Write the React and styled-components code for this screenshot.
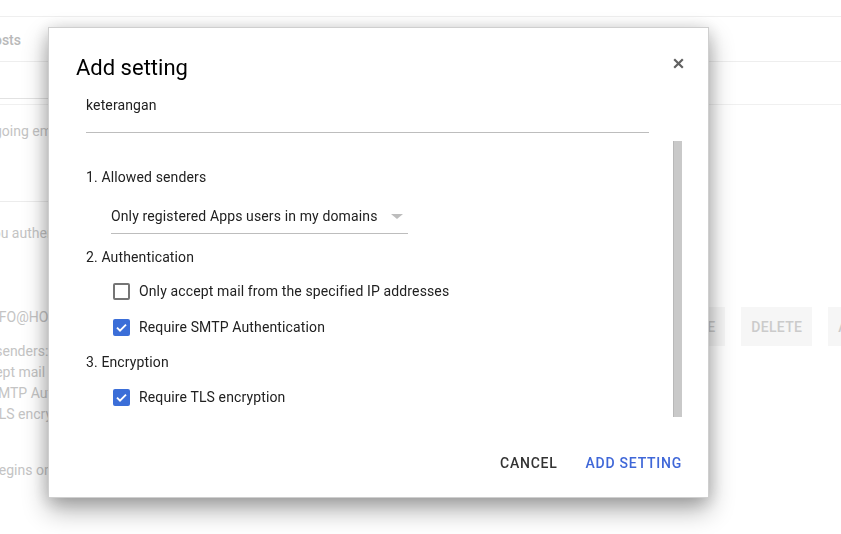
import React, { useLayoutEffect, useRef, useState } from "react";
import styled, { createGlobalStyle } from "styled-components";

const GlobalStyle = createGlobalStyle`
  html, body {
    margin: 0;
    padding: 0;
    background: #ffffff;
    overflow: hidden;
  }
  body {
    font-family: Roboto, "Liberation Sans", Arial, sans-serif;
    -webkit-font-smoothing: antialiased;
  }
`;

/* ---------- page behind the dialog ---------- */

const Page = styled.div`
  width: 960px;
  height: 534px;
  overflow: hidden;
  color: #c4c4c4;
  font-size: 14px;
`;

const TopBar = styled.div`
  height: 16px;
  border-bottom: 1px solid #efefef;
`;

const Tabs = styled.div`
  height: 45px;
  display: flex;
  align-items: center;
  padding-top: 2px;
  box-sizing: border-box;
  border-bottom: 1px solid #eeeeee;
`;

const Tab = styled.div`
  margin-left: ${(p) => -p.offset}px;
  font-size: 14px;
  font-weight: 500;
  color: #b9b9b9;
`;

const SubBar = styled.div`
  width: 640px;
  height: 36px;
  border-bottom: 1px solid #e2e2e2;
`;

const Section = styled.div`
  margin-top: 5px;
  border-top: 1px solid #f0f0f0;
  padding-top: 16px;
`;

const Block = styled.div`
  width: 640px;
  padding-bottom: 60px;
  border-bottom: 1px solid #ececec;
`;

const Line = styled.div`
  margin-left: ${(p) => -p.offset}px;
  line-height: ${(p) => p.lh || 20}px;
  white-space: nowrap;
`;

const AuthLine = styled(Line)`
  margin-top: 21px;
`;

const HostRow = styled.div`
  margin-top: 64px;
  display: grid;
  grid-template-columns: 652px auto;
  align-items: start;
`;

const Summary = styled.div`
  margin-top: 14px;
`;

const Footnote = styled(Line)`
  margin-top: 35px;
`;

const RowButtons = styled.div`
  display: flex;
  gap: 16px;
`;

const FlatButton = styled.div`
  height: 39px;
  padding: 0 10px;
  display: flex;
  align-items: center;
  background: #f6f6f6;
  color: #cbcbcb;
  font-weight: 500;
  letter-spacing: 0.3px;
  white-space: nowrap;
`;

/* ---------- dialog ---------- */

const Dialog = styled.div`
  position: fixed;
  left: 48px;
  top: 27px;
  width: 661px;
  height: 471px;
  box-sizing: border-box;
  background: #ffffff;
  border: 1px solid #cfcfcf;
  box-shadow: 0 12px 24px rgba(0, 0, 0, 0.32), 0 3px 16px rgba(0, 0, 0, 0.18);
  display: flex;
  flex-direction: column;
  color: #212121;
  letter-spacing: 0.13px;
`;

const Header = styled.div`
  display: flex;
  align-items: flex-start;
  justify-content: space-between;
  padding: 26px 18px 10px 27px;
`;

const Title = styled.h2`
  margin: 0;
  font-size: 22px;
  line-height: 28px;
  font-weight: 400;
  letter-spacing: 0;
  color: #000000;
`;

const CloseButton = styled.button`
  margin-top: -3px;
  width: 24px;
  height: 24px;
  padding: 0;
  border: none;
  background: none;
  display: flex;
  align-items: center;
  justify-content: center;
  color: #616161;
`;

const ScrollWrap = styled.div`
  position: relative;
  height: 328px;
  margin: 0 26px 0 26px;
`;

const ScrollBody = styled.div`
  height: 100%;
  padding: 0 33px 17px 11px;
  box-sizing: border-box;
  overflow-y: scroll;
  scrollbar-width: none;

  &::-webkit-scrollbar {
    display: none;
  }
`;

const Thumb = styled.div`
  position: absolute;
  right: 0;
  width: 9px;
  box-sizing: border-box;
  background: #c9c9c9;
  border-left: 1px solid #b8b8b8;
`;

const Field = styled.div`
  margin-top: 40px;
`;

const FieldLabel = styled.div`
  font-size: 12px;
  line-height: 16px;
  color: #757575;
`;

const TextInput = styled.div`
  margin-top: 5px;
  line-height: 20px;
  font-size: 14px;
  padding-bottom: 17px;
  border-bottom: 1px solid #bdbdbd;
`;

const Heading = styled.div`
  margin-top: ${(p) => p.gap}px;
  font-size: 14px;
  line-height: 20px;
  color: #212121;
`;

const Select = styled.div`
  margin: 19px 0 0 25px;
  width: 297px;
  display: flex;
  align-items: center;
  justify-content: space-between;
  font-size: 14px;
  line-height: 20px;
  padding-bottom: 7px;
  border-bottom: 1px solid #bdbdbd;
`;

const Caret = styled.span`
  margin-right: 5px;
  width: 0;
  height: 0;
  border-left: 6px solid transparent;
  border-right: 6px solid transparent;
  border-top: 5px solid #bdbdbd;
`;

const CheckRow = styled.label`
  margin: ${(p) => p.gap}px 0 0 27px;
  display: flex;
  align-items: center;
  gap: 9px;
  font-size: 14px;
  line-height: 20px;
`;

const Box = styled.span`
  width: 17px;
  height: 17px;
  box-sizing: border-box;
  border-radius: 2px;
  display: flex;
  align-items: center;
  justify-content: center;
  border: 2px solid ${(p) => (p.checked ? "#3b6ed8" : "#757575")};
  background: ${(p) => (p.checked ? "#3b6ed8" : "#ffffff")};
`;

const Footer = styled.div`
  flex: 1;
  display: flex;
  justify-content: flex-end;
  align-items: flex-start;
  gap: 12px;
  padding: 25px 18px 0 0;
`;

const TextButton = styled.button`
  height: 36px;
  padding: 0 8px;
  border: none;
  background: none;
  font-family: inherit;
  font-size: 14px;
  font-weight: 500;
  letter-spacing: 0.75px;
  text-transform: uppercase;
  color: ${(p) => (p.primary ? "#3f67d8" : "#333333")};
`;

const Tick = () => (
  <svg width="13" height="13" viewBox="0 0 13 13">
    <path
      d="M2 6.6l3 3L11 3.6"
      fill="none"
      stroke="#ffffff"
      strokeWidth="1.9"
    />
  </svg>
);

const Check = ({ checked, gap, children }) => (
  <CheckRow gap={gap}>
    <Box checked={checked}>{checked && <Tick />}</Box>
    {children}
  </CheckRow>
);

export default function App() {
  const bodyRef = useRef(null);
  const [thumb, setThumb] = useState({ top: 0, height: 0 });

  const syncThumb = () => {
    const el = bodyRef.current;
    if (!el) return;
    const h = el.clientHeight;
    setThumb({
      top: (el.scrollTop / el.scrollHeight) * h,
      height: (h * h) / el.scrollHeight,
    });
  };

  // the dialog opens scrolled a little, past the field label
  useLayoutEffect(() => {
    if (bodyRef.current) bodyRef.current.scrollTop = 58;
    syncThumb();
  }, []);

  return (
    <>
      <GlobalStyle />
      <Page>
        <TopBar />
        <Tabs>
          <Tab offset={16}>Hosts</Tab>
        </Tabs>
        <SubBar />
        <Section>
          <Block>
            <Line offset={28}>Outgoing email gateway</Line>
          </Block>
          <AuthLine offset={26}>If you authenticate with a mail server</AuthLine>
          <HostRow>
            <div>
              <Line offset={15}>INFO@HOSTING.COM</Line>
              <Summary>
                <Line offset={58} lh={21}>Allowed senders: registered users</Line>
                <Line offset={58} lh={21}>Only accept mail from listed IPs</Line>
                <Line offset={61} lh={21}>Require SMTP Authentication</Line>
                <Line offset={60} lh={21}>Require TLS encryption</Line>
              </Summary>
              <Footnote offset={60}>Change begins on next delivery</Footnote>
            </div>
            <RowButtons>
              <FlatButton>ENABLE</FlatButton>
              <FlatButton>DELETE</FlatButton>
              <FlatButton>ADD ANOTHER</FlatButton>
            </RowButtons>
          </HostRow>
        </Section>
      </Page>

      <Dialog>
        <Header>
          <Title>Add setting</Title>
          <CloseButton aria-label="Close">
            <svg width="11" height="11" viewBox="0 0 11 11">
              <path
                d="M1.2 1.2l8.6 8.6M9.8 1.2l-8.6 8.6"
                stroke="currentColor"
                strokeWidth="2.2"
              />
            </svg>
          </CloseButton>
        </Header>

        <ScrollWrap>
          <ScrollBody ref={bodyRef} onScroll={syncThumb}>
            <Field>
              <FieldLabel>Description</FieldLabel>
              <TextInput>keterangan</TextInput>
            </Field>

            <Heading gap={34}>1. Allowed senders</Heading>
            <Select>
              Only registered Apps users in my domains
              <Caret />
            </Select>

            <Heading gap={13}>2. Authentication</Heading>
            <Check gap={14}>Only accept mail from the specified IP addresses</Check>
            <Check gap={16} checked>
              Require SMTP Authentication
            </Check>

            <Heading gap={15}>3. Encryption</Heading>
            <Check gap={15} checked>
              Require TLS encryption
            </Check>
          </ScrollBody>
          <Thumb style={{ top: thumb.top, height: thumb.height }} />
        </ScrollWrap>

        <Footer>
          <TextButton>Cancel</TextButton>
          <TextButton primary>Add setting</TextButton>
        </Footer>
      </Dialog>
    </>
  );
}
